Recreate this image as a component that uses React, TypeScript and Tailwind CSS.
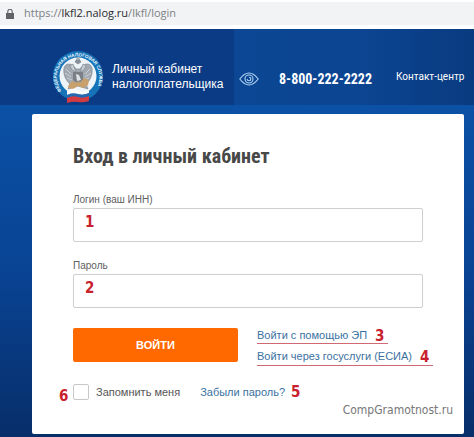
import type { ReactNode } from 'react';

function Emblem() {
  return (
    <svg viewBox="0 0 52 56" className="h-14 w-[52px] shrink-0" role="img" aria-label="ФНС">
      <defs>
        <path id="ring" d="M9.500 42A21.300 21.300 0 1 1 42.500 42" />
      </defs>
      <circle cx="26" cy="27" r="25" fill="#1673b8" />
      <circle cx="26" cy="27" r="18.500" fill="#eef4f8" />
      <text fill="#e9f6ff" fontSize="4.7" fontWeight="bold" fontFamily="Liberation Sans, sans-serif">
        <textPath href="#ring">ФЕДЕРАЛЬНАЯ НАЛОГОВАЯ СЛУЖБА</textPath>
      </text>
      <g fill="#a3a9b0" stroke="#7b828b" strokeWidth=".6">
        <path d="M24 20C20 13 13 14 12 19c-1 5 1 12 6 16l-2 5 10-3 10 3-2-5c5-4 7-11 6-16-1-5-8-6-12 1z" />
        <path d="M21 15l-3 2 2 4 4 2zM31 15l3 2-2 4-4 2z" fill="#c9ced3" />
        <path d="M23 13l3-5 3 5-3 2z" fill="#88909a" />
        <path d="M14 20l5 5M13 24l6 4M15 29l5 2M38 20l-5 5M39 24l-6 4M37 29l-5 2M26 7v4" fill="none" stroke="#e6e9ec" />
      </g>
      <path d="M21 23h10v8l-5 4-5-4z" fill="#7b8086" />
      <path d="M24 25l3 1 2 5-4 1z" fill="#e1e4e7" />
      <path d="M17 35l4-3 3 2 3-2 1 2 4-5 5 2-1 5-5 3-5-2-5 3-5-1z" fill="#c8a06c" />
      <path d="M15 42q6-4 11-1t11-1v4q-6 3-11 1t-11 1z" fill="#f8fafc" />
      <path d="M15 46q6-3 11-1t11-1v4q-6 2-11 1t-11 1z" fill="#2668b0" />
      <path d="M15 49q6-3 11-1t11-1v5q-6 2-11 1t-11 1z" fill="#d33b43" />
    </svg>
  );
}

function EyeIcon() {
  return (
    <svg viewBox="0 0 20 14" className="h-3.5 w-5" fill="none" stroke="#b4d4f4" strokeWidth="1.1">
      <path d="M.8 7Q10-5 19.200 7 10 19 .8 7z" />
      <circle cx="10" cy="7" r="4" />
      <path d="M10 5.200a1.800 1.800 0 1 1-1.800 1.800" />
    </svg>
  );
}

function Mark({ children, className = '' }: { children: ReactNode; className?: string }) {
  return (
    <span className={`font-['DejaVu_Sans_Condensed','DejaVu_Sans',sans-serif] text-[15px] leading-5 font-bold text-[#c9202d] ${className}`}>
      {children}
    </span>
  );
}

function Field({ id, label, type, mark }: { id: string; label: string; type: string; mark: string }) {
  return (
    <div>
      <label htmlFor={id} className="block text-[10px] leading-4 text-[#606060]">{label}</label>
      <div className="relative">
        <input id={id} type={type} className="block h-[34px] w-full rounded-xs border border-[#cfcfcf] bg-white pr-2 pl-8 text-xs outline-none" />
        <Mark className="pointer-events-none absolute top-1 left-3">{mark}</Mark>
      </div>
    </div>
  );
}

export default function App() {
  return (
    <div className="flex min-h-screen flex-col bg-white font-['Liberation_Sans',sans-serif]">
      <div className="mt-0.5 mb-1 flex h-[23px] items-center gap-2.5 bg-[#f1f3f4] px-1.5 text-[#7d8084]">
        <svg viewBox="0 0 8 10" className="h-2.5 w-2" fill="#5f6368">
          <path d="M0 4h8v6H0z" />
          <path d="M1.800 4V2.500a2.200 2.200 0 0 1 4.400 0V4" fill="none" stroke="#5f6368" strokeWidth="1.100" />
        </svg>
        <span className="font-['Open_Sans',sans-serif] text-[11px]">
          https://<span className="text-[#292b2e]">lkfl2.nalog.ru</span>/lkfl/login
        </span>
      </div>

      <header className="flex h-[76px] bg-[#0b3b85] text-white">
        <div className="flex w-[234px] shrink-0 items-center gap-2 pt-5 pl-[52px]">
          <Emblem />
          <div className="text-xs leading-[15px] whitespace-nowrap">
            Личный кабинет<br />налогоплательщика
          </div>
        </div>
        <div className="flex grow items-center gap-5 bg-linear-to-r from-[#0b4794] via-[#0c4592] to-[#093b80] pt-6 pl-[5px]">
          <button type="button" aria-label="Версия для слабовидящих"><EyeIcon /></button>
          <a href="tel:88002222222" className="font-['Roboto_Condensed',sans-serif] text-sm leading-5 font-bold whitespace-nowrap">
            8-800-222-2222
          </a>
          <a href="#contact" className="-mt-1.5 ml-1 font-[Roboto,sans-serif] text-[10px] whitespace-nowrap">Контакт-центр</a>
        </div>
      </header>

      <main className="flex grow bg-linear-to-b from-[#0b51a5] via-[#094394] to-[#072e69] pt-[9px] pr-2.5 pb-[3px] pl-8">
        <form className="flex min-w-0 grow flex-col rounded-xs bg-white px-[41px] pt-7" onSubmit={(e) => e.preventDefault()}>
          <h1 className="font-['Roboto_Condensed',sans-serif] text-xl leading-7 font-bold whitespace-nowrap text-[#484848]">
            Вход в личный кабинет
          </h1>
          <div className="mt-[22px] flex flex-col gap-4">
            <Field id="login" label="Логин (ваш ИНН)" type="text" mark="1" />
            <Field id="password" label="Пароль" type="password" mark="2" />
          </div>
          <div className="mt-5 flex items-start gap-[19px]">
            <button type="submit" className="h-[34px] w-[165px] shrink-0 rounded-xs bg-[#ff6900] text-[11px] font-bold text-white">
              ВОЙТИ
            </button>
            <div className="flex flex-col items-start gap-1 text-[11px] whitespace-nowrap text-[#3b719f]">
              <div className="flex h-4 items-center gap-2 border-b border-[#cf6a74] pr-1">
                <a href="#ep">Войти с помощью ЭП</a>
                <Mark>3</Mark>
              </div>
              <div className="flex h-[18px] items-center gap-2 border-b border-[#cf6a74] pr-1">
                <a href="#esia">Войти через госуслуги (ЕСИА)</a>
                <Mark>4</Mark>
              </div>
            </div>
          </div>
          <div className="relative mt-[18px] flex h-4 items-center text-[11px] whitespace-nowrap">
            <Mark className="absolute top-0.5 -left-3.5">6</Mark>
            <input id="remember" type="checkbox" className="size-4 appearance-none rounded-xs border border-[#c8c8c8] bg-white checked:bg-[#ff6900]" />
            <label htmlFor="remember" className="pl-[7px] text-[#555555]">Запомнить меня</label>
            <a href="#forgot" className="pr-1.5 pl-5 text-[#3b719f]">Забыли пароль?</a>
            <Mark>5</Mark>
          </div>
          <div className="-mr-[30px] text-right font-['DejaVu_Sans_Condensed','DejaVu_Sans',sans-serif] text-xs leading-5 text-[#777777]">
            CompGramotnost.ru
          </div>
        </form>
      </main>
    </div>
  );
}
